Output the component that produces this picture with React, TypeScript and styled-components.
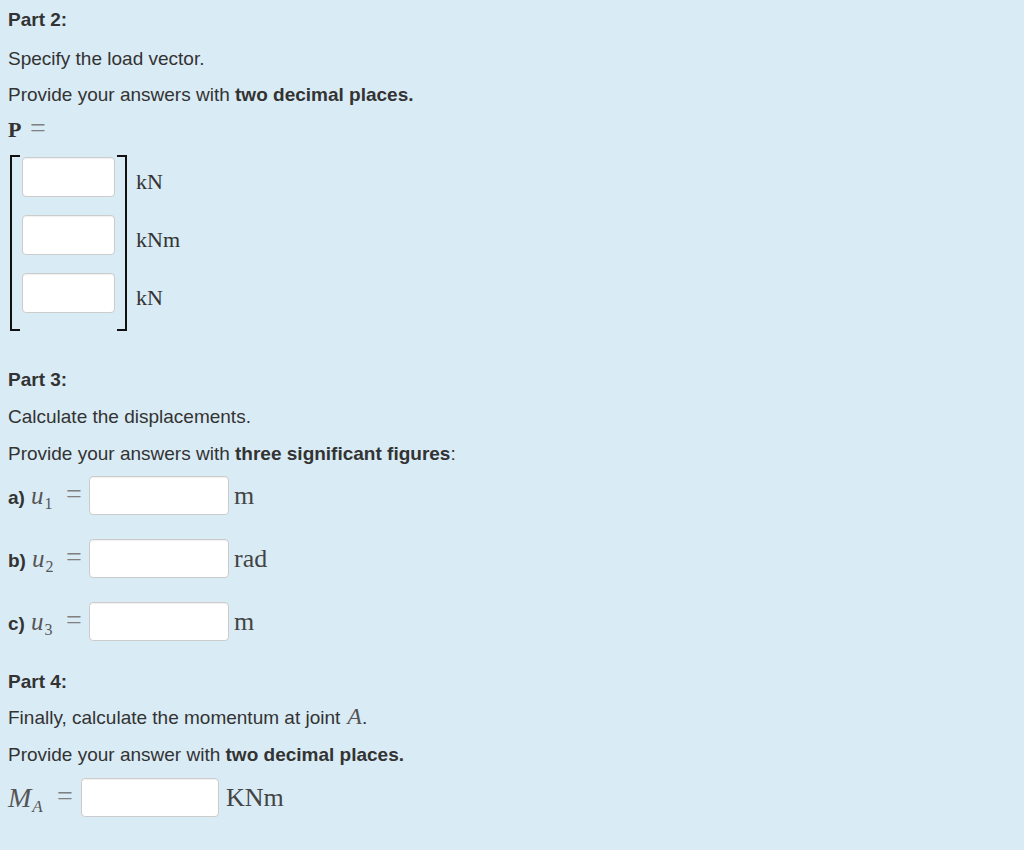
import React from "react";
import styled, { createGlobalStyle } from "styled-components";

const GlobalStyle = createGlobalStyle`
  html, body {
    margin: 0;
    padding: 0;
    min-height: 100%;
    background: #d9ebf5;
  }
  body {
    font-family: "Liberation Sans", Arial, sans-serif;
    font-size: 19px;
    color: #333;
  }
`;

const Page = styled.div`
  padding: 10px 8px 30px;
  min-height: 850px;
  box-sizing: border-box;
`;

const Para = styled.p<{ $gap?: number }>`
  margin: ${(p) => p.$gap ?? 17}px 0 0;
  line-height: 20px;
  &:first-child {
    margin-top: 0;
  }
`;

const Heading = styled(Para)`
  font-weight: bold;
`;

const MathLine = styled.div`
  margin-top: 15px;
  height: 20px;
  display: flex;
  align-items: center;
  font-family: "Liberation Serif", "Times New Roman", serif;
  font-size: 22px;
`;

const BoldSymbol = styled.span`
  font-weight: bold;
  color: #333;
  width: 22px;
`;

const Equals = styled.span<{ $right?: number }>`
  font-family: "Liberation Serif", "Times New Roman", serif;
  font-size: 28px;
  line-height: 20px;
  padding-bottom: 4px;
  color: #808080;
  width: 16px;
  display: flex;
  justify-content: center;
  margin-right: ${(p) => p.$right ?? 0}px;
`;

const Matrix = styled.div`
  display: flex;
  margin: 15px 0 0 2px;
`;

const Bracket = styled.div<{ $side: "left" | "right" }>`
  width: 8px;
  height: 172px;
  border: 2px solid #111;
  ${(p) => (p.$side === "left" ? "border-right: none;" : "border-left: none;")}
`;

const Cells = styled.div`
  display: flex;
  flex-direction: column;
  gap: 18px;
  padding: 2px 2px 0;
`;

const Units = styled.div`
  display: flex;
  flex-direction: column;
  gap: 18px;
  padding: 7px 0 0 9px;
`;

const MatrixUnit = styled.span`
  height: 40px;
  line-height: 40px;
  font-family: "Liberation Serif", "Times New Roman", serif;
  font-size: 22px;
  color: #333;
`;

const Field = styled.input<{ $w: number; $h: number }>`
  width: ${(p) => p.$w}px;
  height: ${(p) => p.$h}px;
  box-sizing: border-box;
  border: 1px solid #ccc;
  border-radius: 4px;
  background: #fff;
  box-shadow: inset 0 1px 1px rgba(0, 0, 0, 0.06);
  padding: 0 8px;
  font-size: 16px;
  outline: none;
`;

const AnswerRow = styled.div<{ $gap: number }>`
  display: flex;
  align-items: center;
  margin-top: ${(p) => p.$gap}px;
`;

const Lead = styled.div<{ $w: number }>`
  width: ${(p) => p.$w}px;
  display: flex;
  align-items: baseline;
`;

const RowLabel = styled.span`
  font-weight: bold;
  font-size: 19px;
  margin-right: 6px;
`;

const Var = styled.span<{ $size: number }>`
  font-family: "Liberation Serif", "Times New Roman", serif;
  font-style: italic;
  font-size: ${(p) => p.$size}px;
  color: #555;
  display: inline-flex;
  align-items: baseline;
`;

const Sub = styled.sub<{ $italic?: boolean; $size?: number }>`
  font-size: ${(p) => p.$size ?? 16}px;
  font-style: ${(p) => (p.$italic ? "italic" : "normal")};
  vertical-align: baseline;
  position: relative;
  top: 5px;
  margin-left: 1px;
`;

const Unit = styled.span<{ $left?: number }>`
  font-family: "Liberation Serif", "Times New Roman", serif;
  font-size: 26px;
  color: #444;
  margin-left: ${(p) => p.$left ?? 5}px;
`;

const InlineVar = styled.span`
  font-family: "Liberation Serif", "Times New Roman", serif;
  font-style: italic;
  font-size: 24px;
  line-height: 0;
  color: #555;
  margin-left: 7px;
`;

const rows = [
  { label: "a)", sub: "1", unit: "m" },
  { label: "b)", sub: "2", unit: "rad" },
  { label: "c)", sub: "3", unit: "m" },
];

const App: React.FC = () => {
  return (
    <Page>
      <GlobalStyle />
      <Heading>Part 2:</Heading>
      <Para $gap={19}>Specify the load vector.</Para>
      <Para $gap={16}>
        Provide your answers with <b>two decimal places.</b>
      </Para>
      <MathLine>
        <BoldSymbol>P</BoldSymbol>
        <Equals>=</Equals>
      </MathLine>
      <Matrix>
        <Bracket $side="left" />
        <Cells>
          <Field $w={93} $h={40} />
          <Field $w={93} $h={40} />
          <Field $w={93} $h={40} />
        </Cells>
        <Bracket $side="right" />
        <Units>
          <MatrixUnit>kN</MatrixUnit>
          <MatrixUnit>kNm</MatrixUnit>
          <MatrixUnit>kN</MatrixUnit>
        </Units>
      </Matrix>

      <Heading $gap={39}>Part 3:</Heading>
      <Para>Calculate the displacements.</Para>
      <Para>
        Provide your answers with <b>three significant figures</b>:
      </Para>
      {rows.map((r, i) => (
        <AnswerRow key={r.label} $gap={i === 0 ? 12 : 24}>
          <Lead $w={58}>
            <RowLabel>{r.label}</RowLabel>
            <Var $size={25}>
              u<Sub>{r.sub}</Sub>
            </Var>
          </Lead>
          <Equals $right={7}>=</Equals>
          <Field $w={140} $h={39} />
          <Unit>{r.unit}</Unit>
        </AnswerRow>
      ))}

      <Heading $gap={31}>Part 4:</Heading>
      <Para $gap={16}>
        Finally, calculate the momentum at joint<InlineVar>A</InlineVar>.
      </Para>
      <Para>
        Provide your answer with <b>two decimal places.</b>
      </Para>
      <AnswerRow $gap={13}>
        <Lead $w={49}>
          <Var $size={28}>
            M<Sub $italic $size={17}>A</Sub>
          </Var>
        </Lead>
        <Equals $right={8}>=</Equals>
        <Field $w={138} $h={39} />
        <Unit $left={7}>KNm</Unit>
      </AnswerRow>
    </Page>
  );
};

export default App;
